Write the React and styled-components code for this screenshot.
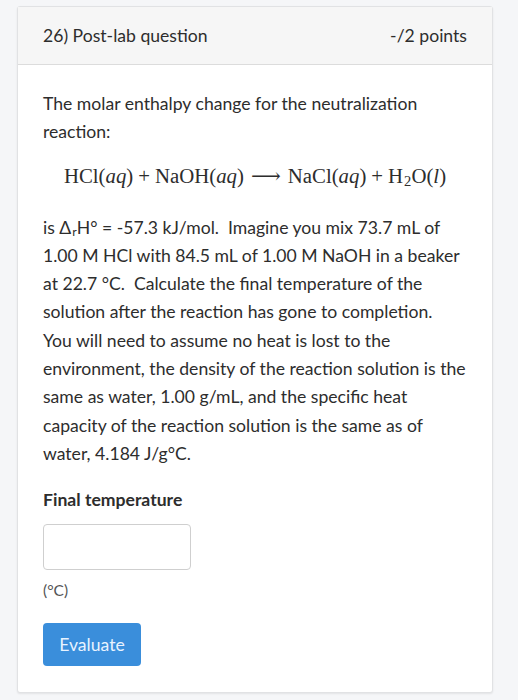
import React from "react";
import styled, { createGlobalStyle } from "styled-components";

const Global = createGlobalStyle`
  html, body { margin: 0; padding: 0; background: #f5f6f8; }
  body { font-family: "Lato", "Open Sans", sans-serif; color: #2d2d2d; }
`;

const Page = styled.div`
  padding: 6px 25px 8px 17px;
`;

const Card = styled.section`
  background: #fff;
  border: 1px solid #e1e2e4;
  border-radius: 3px;
  box-shadow: 0 1px 2px rgba(0,0,0,0.08);
  width: 474px;
`;

const Header = styled.header`
  display: flex;
  justify-content: space-between;
  align-items: center;
  height: 57px;
  padding: 0 25px 0 25px;
  background: #f6f6f6;
  border-bottom: 1px solid #dcdcdc;
  font-size: 17.6px;
`;

const Body = styled.div`
  padding: 25px 25px 26px 25px;
  font-size: 17.6px;
  line-height: 28.3px;
`;

const P = styled.p`
  margin: 0;
`;

const Equation = styled.div`
  font-family: "Liberation Serif", "DejaVu Serif", serif;
  font-size: 20.8px;
  text-align: center;
  margin: 16px 0 25px;
  line-height: 26px;
`;

const I = styled.i`
  font-style: italic;
`;

const Op = styled.span`
  margin: 0 ${(p) => p.$gap || 5}px;
`;

const Sub = styled.sub`
  font-size: 0.7em;
  line-height: 0;
  margin-left: 1px;
  vertical-align: ${(p) => p.$drop || "-0.25em"};
`;

const Heading = styled.h3`
  margin: 18px 0 10px;
  font-size: 17.6px;
  font-weight: 700;
  line-height: 28px;
`;

const Input = styled.input`
  display: block;
  box-sizing: border-box;
  width: 148px;
  height: 46px;
  border: 1px solid #cfcfcf;
  border-radius: 4px;
  background: #fff;
`;

const Unit = styled.div`
  margin-top: 6px;
  font-size: 15.5px;
  color: #555;
  line-height: 28px;
`;

const Button = styled.button`
  margin-top: 19px;
  width: 98px;
  height: 43px;
  border: none;
  border-radius: 4px;
  background: #3a8edb;
  color: #e8f3ff;
  font-family: inherit;
  font-size: 17.6px;
`;

export default function App() {
  return (
    <>
      <Global />
      <Page>
        <Card>
          <Header>
            <span>26) Post-lab question</span>
            <span>-/2 points</span>
          </Header>
          <Body>
            <P>The molar enthalpy change for the neutralization reaction:</P>
            <Equation>
              HCl(<I>aq</I>)<Op>+</Op>NaOH(<I>aq</I>)<Op $gap={7}>⟶</Op>NaCl(<I>aq</I>)<Op>+</Op>H<Sub>2</Sub>O(<I>l</I>)
            </Equation>
            <P>
              is Δ<Sub $drop="-0.2em">r</Sub>H° = -57.3 kJ/mol.&nbsp; Imagine you mix 73.7 mL of 1.00 M HCl with 84.5 mL of 1.00 M NaOH in a beaker at 22.7 °C.&nbsp; Calculate the final temperature of the solution after the reaction has gone to completion.&nbsp; You will need to assume no heat is lost to the environment, the density of the reaction solution is the same as water, 1.00 g/mL, and the specific heat capacity of the reaction solution is the same as of water, 4.184 J/g°C.
            </P>
            <Heading>Final temperature</Heading>
            <Input aria-label="Final temperature" />
            <Unit>(°C)</Unit>
            <Button>Evaluate</Button>
          </Body>
        </Card>
      </Page>
    </>
  );
}
